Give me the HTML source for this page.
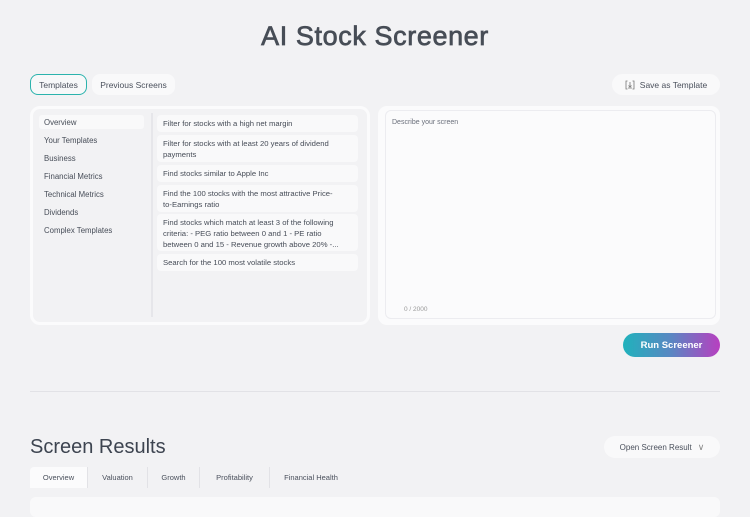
<!DOCTYPE html>
<html><head><style>
*{box-sizing:border-box;margin:0;padding:0}
body{width:750px;height:512px;background:#f2f2f4;font-family:"Liberation Sans",sans-serif;color:#3d4450;position:relative;overflow:hidden}
.a{position:absolute}
.btn{background:#f9f9fa;border-radius:8px;font-size:8.5px;display:flex;align-items:center;justify-content:center;color:#4a505c}
.card{position:absolute;left:157px;width:201px;background:#f9f9fa;border-radius:4px;font-size:7.7px;line-height:11px;padding:3px 6px;color:#474d58}
.side{position:absolute;left:44px;font-size:7.8px;color:#474d58}
.tab{position:absolute;top:467px;height:21px;font-size:7.5px;display:flex;align-items:center;justify-content:center;color:#4a505c;border-right:1px solid #e2e2e6;background:#f2f2f4}
</style></head><body>
<div class="a" style="left:0;width:750px;top:21px;text-align:center;font-size:27px;color:#474d56;letter-spacing:0.6px;-webkit-text-stroke:0.7px #474d56">AI Stock Screener</div>

<div class="a btn" style="left:30px;top:74px;width:57px;height:21px;border:1.5px solid #2bb3ad;background:#f7f8f9">Templates</div>
<div class="a btn" style="left:92px;top:74px;width:83px;height:21px">Previous Screens</div>
<div class="a btn" style="left:612px;top:74px;width:108px;height:21px;border-radius:11px"><svg width="10" height="10" viewBox="0 0 10 10" style="margin-right:5px"><path d="M2.5 1H1v8h1.5M7.5 1H9v8H7.5M5 2v5M3.5 5.5L5 7l1.5-1.5M3 8h4" stroke="#777" stroke-width="0.8" fill="none"/></svg>Save as Template</div>

<div class="a" style="left:30px;top:106px;width:340px;height:219px;border:3px solid #fbfbfc;border-radius:10px;background:#f2f2f4"></div>
<div class="a" style="left:39px;top:115px;width:105px;height:14px;background:#f9f9fa;border-radius:3px"></div>
<div class="side" style="top:118px">Overview</div>
<div class="side" style="top:136px">Your Templates</div>
<div class="side" style="top:154px">Business</div>
<div class="side" style="top:172px">Financial Metrics</div>
<div class="side" style="top:190px">Technical Metrics</div>
<div class="side" style="top:208px">Dividends</div>
<div class="side" style="top:226px">Complex Templates</div>
<div class="a" style="left:151px;top:113px;width:2px;height:204px;background:#e6e6ea"></div>

<div class="card" style="top:115px;height:17px">Filter for stocks with a high net margin</div>
<div class="card" style="top:135px;height:27px">Filter for stocks with at least 20 years of dividend<br>payments</div>
<div class="card" style="top:165px;height:17px">Find stocks similar to Apple Inc</div>
<div class="card" style="top:185px;height:27px">Find the 100 stocks with the most attractive Price-<br>to-Earnings ratio</div>
<div class="card" style="top:214px;height:37px;white-space:nowrap;overflow:hidden">Find stocks which match at least 3 of the following<br>criteria: - PEG ratio between 0 and 1 - PE ratio<br>between 0 and 15 - Revenue growth above 20% -...</div>
<div class="card" style="top:254px;height:17px">Search for the 100 most volatile stocks</div>

<div class="a" style="left:378px;top:106px;width:342px;height:219px;background:#fbfbfc;border-radius:9px"></div>
<div class="a" style="left:385px;top:110px;width:331px;height:209px;background:#fbfbfc;border:1px solid #ececf0;border-radius:6px"></div>
<div class="a" style="left:392px;top:119px;font-size:7px;color:#6a6f7b">Describe your screen</div>
<div class="a" style="left:404px;top:306px;font-size:6.5px;color:#999">0 / 2000</div>

<div class="a" style="left:623px;top:333px;width:97px;height:24px;border-radius:12px;background:linear-gradient(90deg,#20b2bc,#5a86c2,#b83fc0);color:#fff;font-size:9.5px;font-weight:bold;display:flex;align-items:center;justify-content:center">Run Screener</div>

<div class="a" style="left:30px;top:391px;width:690px;height:1px;background:#e2e2e6"></div>

<div class="a" style="left:30px;top:436px;font-size:20px;color:#3d4450">Screen Results</div>
<div class="a btn" style="left:604px;top:436px;width:116px;height:22px;border-radius:11px;font-size:8px">Open Screen Result <span style="margin-left:6px;color:#888;font-size:9px">∨</span></div>

<div class="tab" style="left:30px;width:58px;background:#fbfbfc;border-radius:4px 0 0 0">Overview</div>
<div class="tab" style="left:88px;width:60px">Valuation</div>
<div class="tab" style="left:148px;width:52px">Growth</div>
<div class="tab" style="left:200px;width:70px">Profitability</div>
<div class="tab" style="left:270px;width:82px;border-right:none">Financial Health</div>

<div class="a" style="left:30px;top:497px;width:690px;height:20px;background:#f9f9fa;border-radius:6px"></div>
</body></html>
